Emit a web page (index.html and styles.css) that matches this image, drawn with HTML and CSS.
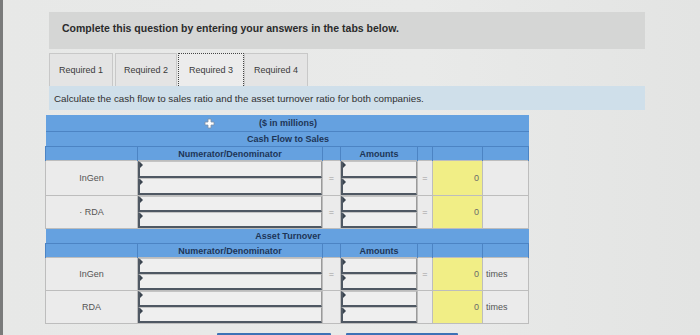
FILE: index.html
```html
<!DOCTYPE html>
<html>
<head>
<meta charset="utf-8">
<link rel="stylesheet" href="styles.css">
</head>
<body>
<div class="edge"></div>
<div class="page">
  <div class="intro">Complete this question by entering your answers in the tabs below.</div>
  <div class="tabs">
    <div class="tab t1">Required 1</div>
    <div class="tab t2">Required 2</div>
    <div class="tab t3 active">Required 3</div>
    <div class="tab t4">Required 4</div>
  </div>
  <div class="instr">Calculate the cash flow to sales ratio and the asset turnover ratio for both companies.</div>
  <table class="grid">
    <colgroup>
      <col class="c-lbl"><col class="c-num"><col class="c-eq"><col class="c-amt"><col class="c-eq2"><col class="c-val"><col class="c-unit">
    </colgroup>
    <tr class="title first">
      <td colspan="7"><span class="move"><svg width="11" height="11" viewBox="0 0 11 11"><path d="M4 1h3v3h3v3H7v3H4V7H1V4h3z" fill="#ffffff" stroke="#7d8fa6" stroke-width="0.8"/></svg></span>($ in millions)</td>
    </tr>
    <tr class="title"><td colspan="7">Cash Flow to Sales</td></tr>
    <tr class="head"><td></td><td>Numerator/Denominator</td><td></td><td>Amounts</td><td></td><td></td><td></td></tr>
    <tr class="row tall">
      <td class="lbl">InGen</td>
      <td class="inp"><div class="box"></div><div class="box"></div></td>
      <td class="eq">=</td>
      <td class="inp"><div class="box"></div><div class="box"></div></td>
      <td class="eq">=</td>
      <td class="val">0</td>
      <td class="unit"></td>
    </tr>
    <tr class="row">
      <td class="lbl">&middot; RDA</td>
      <td class="inp"><div class="box"></div><div class="box"></div></td>
      <td class="eq">=</td>
      <td class="inp"><div class="box"></div><div class="box"></div></td>
      <td class="eq">=</td>
      <td class="val">0</td>
      <td class="unit"></td>
    </tr>
    <tr class="title"><td colspan="7">Asset Turnover</td></tr>
    <tr class="head"><td></td><td>Numerator/Denominator</td><td></td><td>Amounts</td><td></td><td></td><td></td></tr>
    <tr class="row">
      <td class="lbl">InGen</td>
      <td class="inp"><div class="box"></div><div class="box"></div></td>
      <td class="eq">=</td>
      <td class="inp"><div class="box"></div><div class="box"></div></td>
      <td class="eq">=</td>
      <td class="val">0</td>
      <td class="unit">times</td>
    </tr>
    <tr class="row">
      <td class="lbl">RDA</td>
      <td class="inp"><div class="box"></div><div class="box"></div></td>
      <td class="eq"></td>
      <td class="inp"><div class="box"></div><div class="box"></div></td>
      <td class="eq"></td>
      <td class="val">0</td>
      <td class="unit">times</td>
    </tr>
  </table>
  <div class="buttons">
    <div class="btn"></div>
    <div class="btn"></div>
  </div>
</div>
</body>
</html>
```
FILE: styles.css
```css
html, body {
  margin: 0;
  padding: 0;
}
body {
  width: 700px;
  height: 335px;
  overflow: hidden;
  background: linear-gradient(90deg, #e7e8e7 0%, #e9eae9 60%, #e3e4e3 100%);
  font-family: "Liberation Sans", Arial, sans-serif;
  color: #333;
  position: relative;
}
.edge {
  position: absolute;
  left: 0;
  top: 0;
  width: 3px;
  height: 335px;
  background: #7a7b7b;
}
.page {
  padding: 12px 0 0 49px;
  width: 596px;
}
.intro {
  height: 37px;
  box-sizing: border-box;
  background: #d5d6d5;
  padding: 10px 0 0 13px;
  font-weight: bold;
  font-size: 10.5px;
  color: #2b2b2b;
}
.tabs {
  display: flex;
  margin-top: 4px;
  height: 33px;
}
.tab {
  box-sizing: border-box;
  height: 33px;
  border: 1px solid #c8c8c8;
  border-bottom: none;
  background: #e4e4e4;
  font-size: 9px;
  color: #3a3a3a;
  display: flex;
  align-items: center;
  justify-content: center;
}
.t1 { width: 64px; }
.t2 { width: 62px; margin-left: 2px; }
.t3 { width: 66px; margin-left: 1px; }
.t4 { width: 64px; }
.tab.active {
  background: #ececec;
  border: 1px dotted #444;
  border-bottom: none;
}
.instr {
  height: 24px;
  box-sizing: border-box;
  background: #cfdfea;
  padding: 7px 0 0 5px;
  font-size: 9.8px;
  color: #2f2f2f;
}
.grid {
  margin: 5px 0 0 -4px;
  border-collapse: collapse;
  table-layout: fixed;
  width: 483px;
  font-size: 9px;
}
.c-lbl { width: 92px; }
.c-num { width: 185px; }
.c-eq { width: 18px; }
.c-amt { width: 77px; }
.c-eq2 { width: 15px; }
.c-val { width: 50px; }
.c-unit { width: 46px; }
.grid td {
  padding: 0;
}
.title td {
  background: #65a1e0;
  color: #1d3557;
  font-weight: bold;
  text-align: center;
  height: 14px;
  border-top: 1px solid #4c84c4;
  position: relative;
  padding-left: 2px;
}
.title.first td {
  height: 16px;
  border-top: none;
}
.move {
  position: absolute;
  left: 158px;
  top: 3px;
  line-height: 0;
}
.head td {
  background: #65a1e0;
  color: #1d3557;
  font-weight: bold;
  text-align: center;
  height: 13px;
  border: 1px solid #4c84c4;
  border-bottom: none;
}
.row td {
  background: #ebebeb;
  height: 30px;
  border: 1px solid #bdbdbd;
  vertical-align: middle;
}
.row.tall td { height: 33px; }
.lbl {
  text-align: center;
  color: #555;
}
.inp {
  vertical-align: top;
}
.row td.inp {
  background: #eeeeee;
  vertical-align: top;
}
.box {
  position: relative;
  height: 13px;
  border-left: 2px solid #4f5863;
  border-bottom: 2px solid #4f5863;
  border-top: 1px solid #c4c4c4;
  border-right: 1px solid #9a9a9a;
  background: #efefef;
}
.row.tall .box { height: 14px; }
.box::before {
  content: "";
  position: absolute;
  left: 0;
  top: 0;
  border-top: 3px solid transparent;
  border-bottom: 3px solid transparent;
  border-left: 3px solid #3b4550;
}
.eq {
  text-align: center;
  color: #9a9a9a;
  font-size: 9px;
}
.row td.val {
  background: #f1ee86;
  text-align: right;
  padding-right: 3px;
  color: #6a6a6a;
}
.unit {
  color: #555;
  padding-left: 3px !important;
}
.buttons {
  display: flex;
  margin: 9px 0 0 168px;
  gap: 15px;
}
.btn {
  width: 114px;
  height: 6px;
  background: #3d72b6;
  border-radius: 1px;
}
.btn + .btn { width: 112px; }
```
